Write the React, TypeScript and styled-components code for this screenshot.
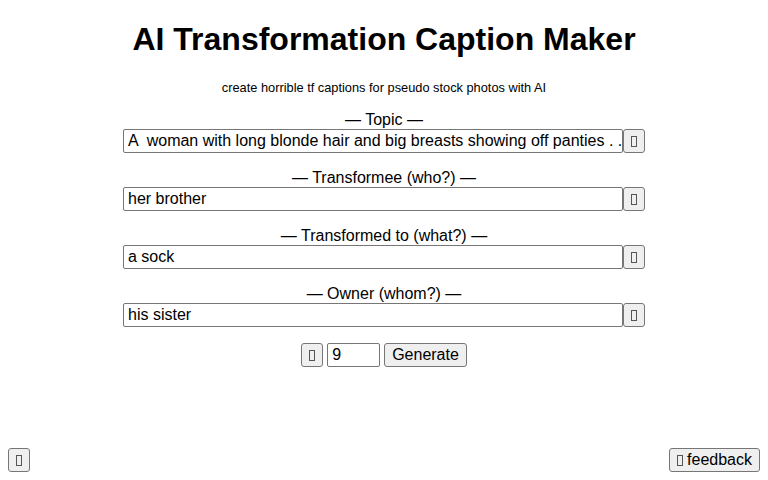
import React from 'react';
import styled, { createGlobalStyle } from 'styled-components';

const GlobalStyle = createGlobalStyle`
  body {
    margin: 0;
    font-family: "Liberation Sans", Arial, sans-serif;
    color: #000;
    background: #fff;
  }
`;

const Page = styled.div`
  padding: 0 8px;
  text-align: center;
  overflow: hidden;
`;

const Title = styled.h1`
  font-size: 32px;
  font-weight: bold;
  margin: 21.44px 0;
`;

const Subtitle = styled.p`
  font-size: 12.8px;
  margin: 13px 0;
`;

const Field = styled.div`
  margin: 16px 0;
  font-size: 16px;
`;

const Label = styled.div`
  line-height: 18px;
`;

const Row = styled.div<{ $gap?: number }>`
  display: flex;
  justify-content: center;
  align-items: center;
  gap: ${(p) => p.$gap ?? 0}px;
`;

const TextInput = styled.input<{ $w: number }>`
  box-sizing: border-box;
  width: ${(p) => p.$w}px;
  height: 24px;
  font-family: "Liberation Sans", Arial, sans-serif;
  font-size: 16px;
  padding: 1px 1px 1px 4px;
  border: 1px solid #767676;
  border-radius: 2px;
  outline: none;
  margin: 0;
`;

const Button = styled.button`
  box-sizing: border-box;
  height: 24px;
  font-family: "Liberation Sans", Arial, sans-serif;
  font-size: 16px;
  padding: 1px 7px;
  margin: 0;
  background: #efefef;
  border: 1px solid #767676;
  border-radius: 3px;
  color: #000;
  white-space: nowrap;
`;

/* the icons show up as missing-glyph boxes in the reference */
const Tofu = styled.span`
  display: inline-block;
  box-sizing: border-box;
  width: 6px;
  height: 11px;
  border: 1px solid #555;
  vertical-align: -1px;
`;

const Corner = styled.div<{ $side: 'left' | 'right' }>`
  position: fixed;
  bottom: 8px;
  ${(p) => p.$side}: 8px;
`;

const fields = [
  { label: 'Topic', value: 'A  woman with long blonde hair and big breasts showing off panties . . . . . .' },
  { label: 'Transformee (who?)', value: 'her brother' },
  { label: 'Transformed to (what?)', value: 'a sock' },
  { label: 'Owner (whom?)', value: 'his sister' },
];

export default function App() {
  return (
    <Page>
      <GlobalStyle />
      <Title>AI Transformation Caption Maker</Title>
      <Subtitle>create horrible tf captions for pseudo stock photos with AI</Subtitle>
      {fields.map((f) => (
        <Field key={f.label}>
          <Label>— {f.label} —</Label>
          <Row>
            <TextInput $w={500} type="text" defaultValue={f.value} />
            <Button aria-label="random"><Tofu /></Button>
          </Row>
        </Field>
      ))}
      <Field>
        <Row $gap={4}>
          <Button aria-label="random all"><Tofu /></Button>
          <TextInput $w={53} type="text" defaultValue="9" />
          <Button>Generate</Button>
        </Row>
      </Field>
      <Corner $side="left">
        <Button aria-label="settings"><Tofu /></Button>
      </Corner>
      <Corner $side="right">
        <Button><Tofu /> feedback</Button>
      </Corner>
    </Page>
  );
}
